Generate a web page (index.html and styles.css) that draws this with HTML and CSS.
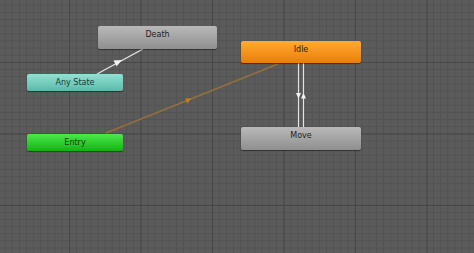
FILE: index.html
```html
<!DOCTYPE html>
<html lang="en">
  <head>
    <meta charset="UTF-8" />
    <meta name="viewport" content="width=device-width, initial-scale=1.0" />
    <title>Animator</title>
    <link rel="stylesheet" href="styles.css">
  </head>
  <body>
    <div class="graph">
      <svg class="links" width="474" height="253" viewBox="0 0 474 253">
        <!-- Entry -> Idle -->
        <line x1="106" y1="133" x2="278" y2="64" stroke="#94703a" stroke-width="1.4" />
        <polygon points="191.2,98.8 185.2,98.2 187.2,103.4" fill="#c98018" />

        <!-- Any State -> Death -->
        <line x1="97" y1="74" x2="143" y2="49" stroke="#e8e8e8" stroke-width="1.2" />
        <polygon points="122,60 113.5,60.5 116.6,66.2" fill="#f2f2f2" />

        <!-- Idle <-> Move -->
        <line x1="298.5" y1="63" x2="298.5" y2="127" stroke="#e4e4e4" stroke-width="1.2" />
        <line x1="303.5" y1="63" x2="303.5" y2="127" stroke="#e4e4e4" stroke-width="1.2" />
        <polygon points="296,93 301,93 298.5,98.5" fill="#f4f4f4" />
        <polygon points="301,98.5 306,98.5 303.5,93" fill="#f4f4f4" />
      </svg>

      <div class="node node-grey" style="left: 98px; top: 26px; width: 119px; height: 23px;">Death</div>
      <div class="node node-orange" style="left: 241px; top: 41px; width: 120px; height: 22px;">Idle</div>
      <div class="node node-teal" style="left: 27px; top: 74px; width: 96px; height: 17px;">Any State</div>
      <div class="node node-green" style="left: 27px; top: 134px; width: 96px; height: 17px;">Entry</div>
      <div class="node node-grey" style="left: 241px; top: 127px; width: 120px; height: 23px;">Move</div>
    </div>
  </body>
</html>
```

FILE: styles.css
```css
body {
  margin: 0;
  font-family: "DejaVu Sans", "Liberation Sans", sans-serif;
  background-color: #585858;
}

.graph {
  position: relative;
  width: 474px;
  height: 253px;
  overflow: hidden;
  background-color: #5b5b5b;
  background-image:
    linear-gradient(to right, #474747 1px, transparent 1px),
    linear-gradient(to bottom, #474747 1px, transparent 1px),
    linear-gradient(to right, #525252 1px, transparent 1px),
    linear-gradient(to bottom, #525252 1px, transparent 1px);
  background-size: 71.5px 71.5px, 71.5px 71.5px, 7.15px 7.15px, 7.15px 7.15px;
  background-position: -2.5px -9.5px, -2.5px -9.5px, -2.5px -9.5px, -2.5px -9.5px;
}

.links {
  position: absolute;
  left: 0;
  top: 0;
}

.node {
  position: absolute;
  box-sizing: border-box;
  padding-top: 3px;
  font-size: 8px;
  line-height: 11px;
  text-align: center;
  color: #1e1e1e;
  border-radius: 2px;
  box-shadow: 0 1px 1px rgba(0, 0, 0, 0.45);
}

.node-grey {
  background: linear-gradient(to bottom, #b9b9b9, #8f8f8f);
}

.node-orange {
  background: linear-gradient(to bottom, #ffab35, #ec7d04);
  color: #2a1a04;
}

.node-teal {
  background: linear-gradient(to bottom, #8fe3d3, #5db8a8);
  color: #163a34;
}

.node-green {
  background: linear-gradient(to bottom, #4ee84e, #10b410);
  color: #0d3a0d;
}
```
